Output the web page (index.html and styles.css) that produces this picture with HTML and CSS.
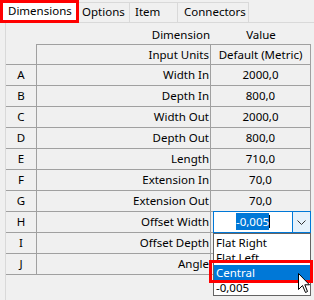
FILE: index.html
```html
<!DOCTYPE html>
<html>
<head>
<meta charset="utf-8">
<link rel="stylesheet" href="styles.css">
</head>
<body>
<div class="tabs">
  <div class="tab active">Dimensions</div>
  <div class="tab t-options">Options</div>
  <div class="tab t-item">Item</div>
  <div class="tab t-conn">Connectors</div>
</div>
<div class="panel">
  <div class="grid">
    <div class="c h1"></div><div class="c h1 dim">Dimension</div><div class="c h1 val">Value</div>
    <div class="c h2 rh"></div><div class="c h2 dim">Input Units</div><div class="c h2 val">Default (Metric)</div>

    <div class="c r rh">A</div><div class="c r dim">Width In</div><div class="c r val">2000,0</div>
    <div class="c r rh">B</div><div class="c r dim">Depth In</div><div class="c r val">800,0</div>
    <div class="c r rh">C</div><div class="c r dim">Width Out</div><div class="c r val">2000,0</div>
    <div class="c r rh">D</div><div class="c r dim">Depth Out</div><div class="c r val">800,0</div>
    <div class="c r rh">E</div><div class="c r dim">Length</div><div class="c r val">710,0</div>
    <div class="c r rh">F</div><div class="c r dim">Extension In</div><div class="c r val">70,0</div>
    <div class="c r rh">G</div><div class="c r dim">Extension Out</div><div class="c r val">70,0</div>
    <div class="c r rh">H</div><div class="c r dim">Offset Width</div>
    <div class="c r val editing">
      <div class="combo">
        <div class="combo-text"><span class="sel">-0,005</span><span class="caret"></span></div>
        <div class="combo-btn">
          <svg width="9" height="5" viewBox="0 0 9 5"><path d="M0.5 0.5 L4.5 4.5 L8.5 0.5" fill="none" stroke="#333" stroke-width="1"/></svg>
        </div>
      </div>
      <div class="list">
        <div class="item">Flat Right</div>
        <div class="item">Flat Left</div>
        <div class="item hl">Central</div>
        <div class="item">-0,005</div>
      </div>
      <div class="redbox"></div>
      <svg class="cursor" width="13" height="21" viewBox="0 0 13 21"><path d="M0.5 0.5 L0.5 16.5 L4.5 12.5 L7.5 19.5 L9.5 18.5 L6.8 11.8 L11.5 11.8 Z" fill="#fff" stroke="#000" stroke-width="1" stroke-linejoin="miter"/></svg>
    </div>
    <div class="c r rh">I</div><div class="c r dim">Offset Depth</div><div class="c r val"></div>
    <div class="c r rh">J</div><div class="c r dim">Angle</div><div class="c r val"></div>
  </div>
</div>
</body>
</html>
```
FILE: styles.css
```css
html, body {
  margin: 0;
  padding: 0;
  background: #f0f0f0;
}
body {
  width: 314px;
  height: 300px;
  overflow: hidden;
  font-family: "Noto Sans", "DejaVu Sans", sans-serif;
  font-size: 11.5px;
  color: #000;
}
.tabs {
  display: flex;
  height: 22px;
  align-items: flex-end;
}
.tab {
  box-sizing: border-box;
  height: 20px;
  line-height: 18px;
  border-top: 1px solid #d9d9d9;
  border-right: 1px solid #d9d9d9;
  background: #f0f0f0;
  white-space: nowrap;
}
.tab.active {
  height: 23px;
  width: 79px;
  align-self: flex-start;
  border: 3px solid #ff0000;
  background: #fff;
  padding-left: 5px;
  line-height: 16px;
  position: relative;
  z-index: 2;
}
.t-options { width: 51px; padding-left: 3px; }
.t-item { width: 48px; padding-left: 5px; }
.t-conn { width: 71px; padding-left: 6px; }

.panel {
  border-top: 1px solid #d9d9d9;
  padding-left: 5px;
  height: 277px;
}
.grid {
  border-left: 1px solid #d9d9d9;
  height: 100%;
  display: grid;
  grid-template-columns: 31px 174px 100px;
  grid-auto-rows: min-content;
  align-content: start;
}
.c {
  box-sizing: border-box;
  white-space: nowrap;
}
.h1 {
  height: 21px;
  line-height: 20px;
  padding-top: 2px;
}
.h2 {
  height: 21px;
  line-height: 19px;
  border-top: 1px solid #a0a0a0;
  border-right: 1px solid #a0a0a0;
  border-bottom: 1px solid #a0a0a0;
}
.h2.rh {
  border-top: none;
}
.r {
  height: 21px;
  line-height: 20px;
  border-right: 1px solid #a0a0a0;
  border-bottom: 1px solid #a0a0a0;
}
.rh { text-align: center; }
.dim { text-align: right; padding-right: 1px; }
.val { text-align: center; }

.editing { position: relative; }
.combo {
  position: absolute;
  left: 2px;
  top: -1px;
  width: 98px;
  height: 22px;
  box-sizing: border-box;
  border: 1px solid #0078d7;
  background: #fff;
  display: flex;
  z-index: 3;
}
.combo-text {
  flex: 1;
  text-align: center;
  line-height: 20px;
}
.sel {
  background: #0078d7;
  color: #fff;
  padding: 1px 0;
}
.caret {
  display: inline-block;
  width: 1px;
  height: 13px;
  background: #000;
  vertical-align: -2px;
}
.combo-btn {
  width: 17px;
  background: #e5f1fb;
  border-left: 1px solid #0078d7;
  display: flex;
  align-items: center;
  justify-content: center;
}
.list {
  position: absolute;
  left: 2px;
  top: 21px;
  width: 98px;
  box-sizing: border-box;
  border: 1px solid #646464;
  background: #fff;
  z-index: 3;
  text-align: left;
  padding-top: 1px;
}
.item {
  height: 15px;
  line-height: 15px;
  padding-left: 2px;
}
.item.hl {
  background: #0078d7;
  color: #fff;
}
.redbox {
  position: absolute;
  left: -2px;
  top: 48px;
  width: 104px;
  height: 23px;
  box-sizing: border-box;
  border: 3px solid #ff0000;
  z-index: 4;
}
.cursor {
  position: absolute;
  left: 87px;
  top: 61px;
  z-index: 5;
}
```
